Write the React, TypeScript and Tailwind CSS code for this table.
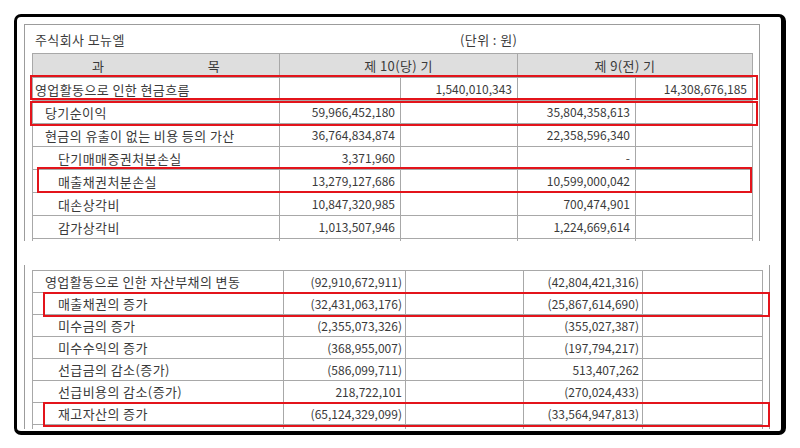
type Row = { label: string; indent: string; v: string[] };

const topRows: Row[] = [
  { label: "영업활동으로 인한 현금흐름", indent: "pl-[2px]", v: ["", "1,540,010,343", "", "14,308,676,185"] },
  { label: "당기순이익", indent: "pl-[12px]", v: ["59,966,452,180", "", "35,804,358,613", ""] },
  { label: "현금의 유출이 없는 비용 등의 가산", indent: "pl-[12px]", v: ["36,764,834,874", "", "22,358,596,340", ""] },
  { label: "단기매매증권처분손실", indent: "pl-[25px]", v: ["3,371,960", "", "-", ""] },
  { label: "매출채권처분손실", indent: "pl-[25px]", v: ["13,279,127,686", "", "10,599,000,042", ""] },
  { label: "대손상각비", indent: "pl-[25px]", v: ["10,847,320,985", "", "700,474,901", ""] },
  { label: "감가상각비", indent: "pl-[25px]", v: ["1,013,507,946", "", "1,224,669,614", ""] },
];

const bottomRows: Row[] = [
  { label: "영업활동으로 인한 자산부채의 변동", indent: "pl-[12px]", v: ["(92,910,672,911)", "", "(42,804,421,316)", ""] },
  { label: "매출채권의 증가", indent: "pl-[25px]", v: ["(32,431,063,176)", "", "(25,867,614,690)", ""] },
  { label: "미수금의 증가", indent: "pl-[25px]", v: ["(2,355,073,326)", "", "(355,027,387)", ""] },
  { label: "미수수익의 증가", indent: "pl-[25px]", v: ["(368,955,007)", "", "(197,794,217)", ""] },
  { label: "선급금의 감소(증가)", indent: "pl-[25px]", v: ["(586,099,711)", "", "513,407,262", ""] },
  { label: "선급비용의 감소(증가)", indent: "pl-[25px]", v: ["218,722,101", "", "(270,024,433)", ""] },
  { label: "재고자산의 증가", indent: "pl-[25px]", v: ["(65,124,329,099)", "", "(33,564,947,813)", ""] },
];

const topCols = "grid-cols-[247px_121px_117px_118px_117px]";
const bottomCols = "grid-cols-[251px_122px_118px_119px_120px]";

const DataRow = ({ row, cols, height, pr }: { row: Row; cols: string; height: string; pr: string }) => (
  <div className={`grid ${cols} ${height} border-b border-[#a8a8a8]`}>
    <div className={`flex items-center border-r border-[#a8a8a8] whitespace-nowrap text-[13px] tracking-[0.4px] ${row.indent}`}>
      {row.label}
    </div>
    {row.v.map((x, i) => (
      <div key={i} className={`flex items-center justify-end border-r border-[#a8a8a8] ${pr}`}>
        {x}
      </div>
    ))}
  </div>
);

// bottom stub where the column lines run past the cropped table
const Stub = ({ cols, height }: { cols: string; height: string }) => (
  <div className={`grid ${cols} ${height}`}>
    {[0, 1, 2, 3, 4].map((i) => (
      <div key={i} className="border-r border-[#a8a8a8]" />
    ))}
  </div>
);

const RedBox = ({ className }: { className: string }) => (
  <div className={`absolute border-2 border-[#e3141b] ${className}`} />
);

export default function App() {
  return (
    <div className="relative w-[800px] h-[448px] bg-white pt-[14px] pl-[14px] font-['Noto_Sans_CJK_KR','Noto_Sans',sans-serif] text-[12px] leading-none text-[#3a3a3a]">
      <div className="w-[772px] h-[421px] rounded-[7px] border-l-[3px] border-t-[3px] border-r-[5px] border-b-[4px] border-black pt-[7px] pl-[7px]">
        {/* top cut-out */}
        <div className="w-[736px] border-l border-t border-r border-[#9c9c9c] pl-[7px] pr-[6px]">
          <div className="flex h-[28px] items-center text-[13px] tracking-[0.4px]">
            <span className="w-[428px] pl-[3px]">주식회사 모뉴엘</span>
            <span>(단위 : 원)</span>
          </div>
          <div className="w-[721px] border-l border-t border-[#a8a8a8]">
            <div className={`grid ${topCols} h-[24px] border-b border-[#a8a8a8] bg-[#dedede] text-[13px] tracking-[0.4px]`}>
              <div className="flex items-center justify-between border-r border-[#a8a8a8] px-[59px]">
                <span>과</span>
                <span>목</span>
              </div>
              <div className="col-span-2 flex items-center justify-center border-r border-[#a8a8a8]">제 10(당) 기</div>
              <div className="col-span-2 flex items-center justify-center border-r border-[#a8a8a8] pr-[20px]">제 9(전) 기</div>
            </div>
            {topRows.map((r) => (
              <DataRow key={r.label} row={r} cols={topCols} height="h-[23px]" pr="pr-[5px]" />
            ))}
            <Stub cols={topCols} height="h-[2px]" />
          </div>
        </div>

        {/* bottom cut-out */}
        <div className="mt-[24px] w-[746px] border-l border-r border-[#9c9c9c] pl-[7px] pr-[6px] pt-[5px]">
          <div className="w-[731px] border-l border-t border-[#a8a8a8]">
            {bottomRows.map((r) => (
              <DataRow key={r.label} row={r} cols={bottomCols} height="h-[22px]" pr="pr-[3px]" />
            ))}
            <Stub cols={bottomCols} height="h-[4px]" />
          </div>
        </div>
      </div>

      <RedBox className="left-[30px] top-[75px] w-[728px] h-[25px]" />
      <RedBox className="left-[30px] top-[101px] w-[728px] h-[25px]" />
      <RedBox className="left-[37px] top-[167px] w-[715px] h-[26px]" />
      <RedBox className="left-[43px] top-[292px] w-[727px] h-[25px]" />
      <RedBox className="left-[43px] top-[402px] w-[727px] h-[25px]" />
    </div>
  );
}
